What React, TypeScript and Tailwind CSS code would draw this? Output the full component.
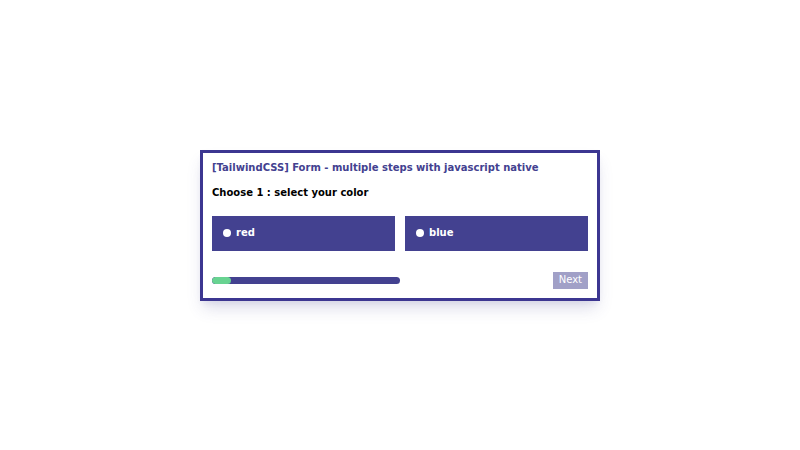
import React, { useState } from 'react';

const options = ['red', 'blue'];

export default function App() {
  const [selected, setSelected] = useState<string | null>(null);
  const progress = 10;

  return (
    <div className="w-[800px] h-[450px] bg-white flex items-center justify-center font-['DejaVu_Sans',sans-serif]">
      <div className="w-[400px] border-[3px] border-[#3c3691] bg-white p-[9px] shadow-[0_10px_15px_-3px_rgba(67,65,144,0.18),0_4px_6px_-2px_rgba(67,65,144,0.08)]">
        <h1 className="text-[10px] leading-[12px] font-bold text-[#434190]">
          [TailwindCSS] Form - multiple steps with javascript native
        </h1>
        <p className="text-[10px] leading-[12px] font-bold text-black mt-[13px]">Choose 1 : select your color</p>

        <div className="grid grid-cols-2 gap-[10px] mt-[17px]">
          {options.map((opt) => (
            <label
              key={opt}
              className="h-[35px] bg-[#434190] flex items-center pl-[11px] gap-[5px] cursor-pointer"
              onClick={() => setSelected(opt)}
            >
              <span className="w-[8px] h-[8px] rounded-full bg-white flex items-center justify-center">
                {selected === opt && <span className="w-[4px] h-[4px] rounded-full bg-[#434190]" />}
              </span>
              <span className="text-white text-[10px] font-bold leading-none">{opt}</span>
            </label>
          ))}
        </div>

        <div className="flex items-center justify-between mt-[21px]">
          <div className="w-[188px] h-[7px] rounded-full bg-[#434190] overflow-hidden">
            <div className="h-full rounded-full bg-[#68d391]" style={{ width: `${progress}%` }} />
          </div>
          <button className="h-[17px] px-[6px] bg-[#434190]/50 text-white text-[10px] leading-none">Next</button>
        </div>
      </div>
    </div>
  );
}
